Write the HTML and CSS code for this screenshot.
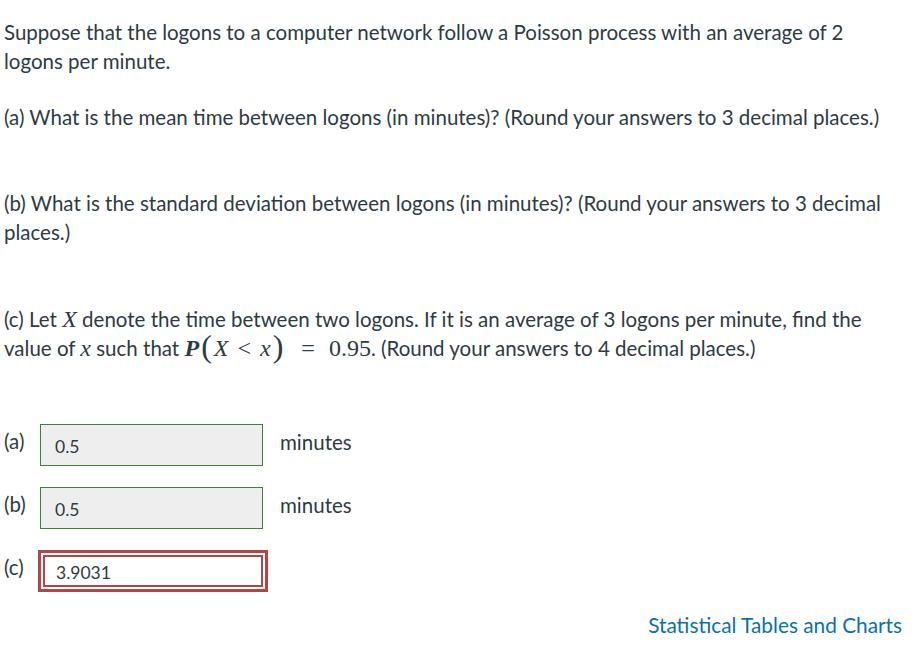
FILE: index.html
```html
<!DOCTYPE html>
<html>
<head>
<meta charset="utf-8">
<link rel="stylesheet" href="styles.css">
</head>
<body>
<div class="page">
  <p class="q q-intro">Suppose that the logons to a computer network follow a Poisson process with an average of 2 logons per minute.</p>
  <p class="q q-a">(a) What is the mean time between logons (in minutes)? (Round your answers to 3 decimal places.)</p>
  <p class="q q-b">(b) What is the standard deviation between logons (in minutes)? (Round your answers to 3 decimal places.)</p>
  <p class="q q-c">(c) Let <span class="mi">X</span> denote the time between two logons. If it is an average of 3 logons per minute, find the value of <span class="mi">x</span> such that <span class="math"><span class="mi mp">P</span><span class="paren">(</span><span class="mi">X</span><span class="mo">&lt;</span><span class="mi">x</span><span class="paren">)</span><span class="mo eq">=</span><span class="mn">0.95</span></span>. (Round your answers to 4 decimal places.)</p>

  <div class="answers">
    <div class="row">
      <span class="label">(a)</span>
      <div class="box box-ok">0.5</div>
      <span class="unit">minutes</span>
    </div>
    <div class="row">
      <span class="label">(b)</span>
      <div class="box box-ok">0.5</div>
      <span class="unit">minutes</span>
    </div>
    <div class="row">
      <span class="label">(c)</span>
      <div class="box box-bad">3.9031</div>
    </div>
  </div>

  <div class="footer">
    <a class="link" href="#">Statistical Tables and Charts</a>
  </div>
</div>
</body>
</html>
```

FILE: styles.css
```css
html, body {
  margin: 0;
  padding: 0;
  background: #ffffff;
}
body {
  font-family: Lato, "Liberation Sans", sans-serif;
  font-size: 20.5px;
  color: #2d3b45;
}
.page {
  padding: 18px 14px 0 4px;
}
.q {
  margin: 0;
  line-height: 29px;
}
.q-a { margin-top: 27px; }
.q-b { margin-top: 57px; }
.q-c { margin-top: 58px; }

.mi {
  font-family: "Liberation Serif", "DejaVu Serif", serif;
  font-style: italic;
  font-size: 24px;
  line-height: 1;
}
.mp {
  font-weight: bold;
}
.math {
  font-family: "Liberation Serif", "DejaVu Serif", serif;
  font-size: 24px;
  line-height: 1;
  white-space: nowrap;
}
.paren {
  font-size: 32px;
  font-weight: 300;
  line-height: 0;
  margin: 0 2px;
  position: relative;
  top: 1px;
}
.mo {
  margin: 0 9px;
}
.eq {
  margin: 0 14px 0 16px;
}
.mn {
  font-size: 24px;
}

.answers {
  margin-top: 61px;
  display: flex;
  flex-direction: column;
  gap: 21px;
}
.row {
  display: flex;
  align-items: flex-start;
  height: 42px;
}
.label {
  width: 36px;
  line-height: 34px;
}
.box {
  box-sizing: border-box;
  height: 42px;
  font-family: Lato, "Liberation Sans", sans-serif;
  font-size: 17.5px;
  display: flex;
  align-items: center;
  color: #2d3b45;
}
.box-ok {
  width: 223px;
  background: #eeeeee;
  border: 1px solid #3f7f3f;
  padding: 3px 0 0 14px;
}
.box-bad {
  width: 230px;
  margin-left: -2px;
  background: #ffffff;
  border: 3px solid #b04744;
  box-shadow: inset 0 0 0 2px #ffffff, inset 0 0 0 4px #b04744;
  padding: 3px 0 0 15px;
}
.unit {
  margin-left: 17px;
  line-height: 37px;
}
.footer {
  margin-top: 18px;
  display: flex;
  justify-content: flex-end;
}
.link {
  color: #0a72a8;
  font-size: 20.8px;
  text-decoration: none;
  line-height: 29px;
}
```
